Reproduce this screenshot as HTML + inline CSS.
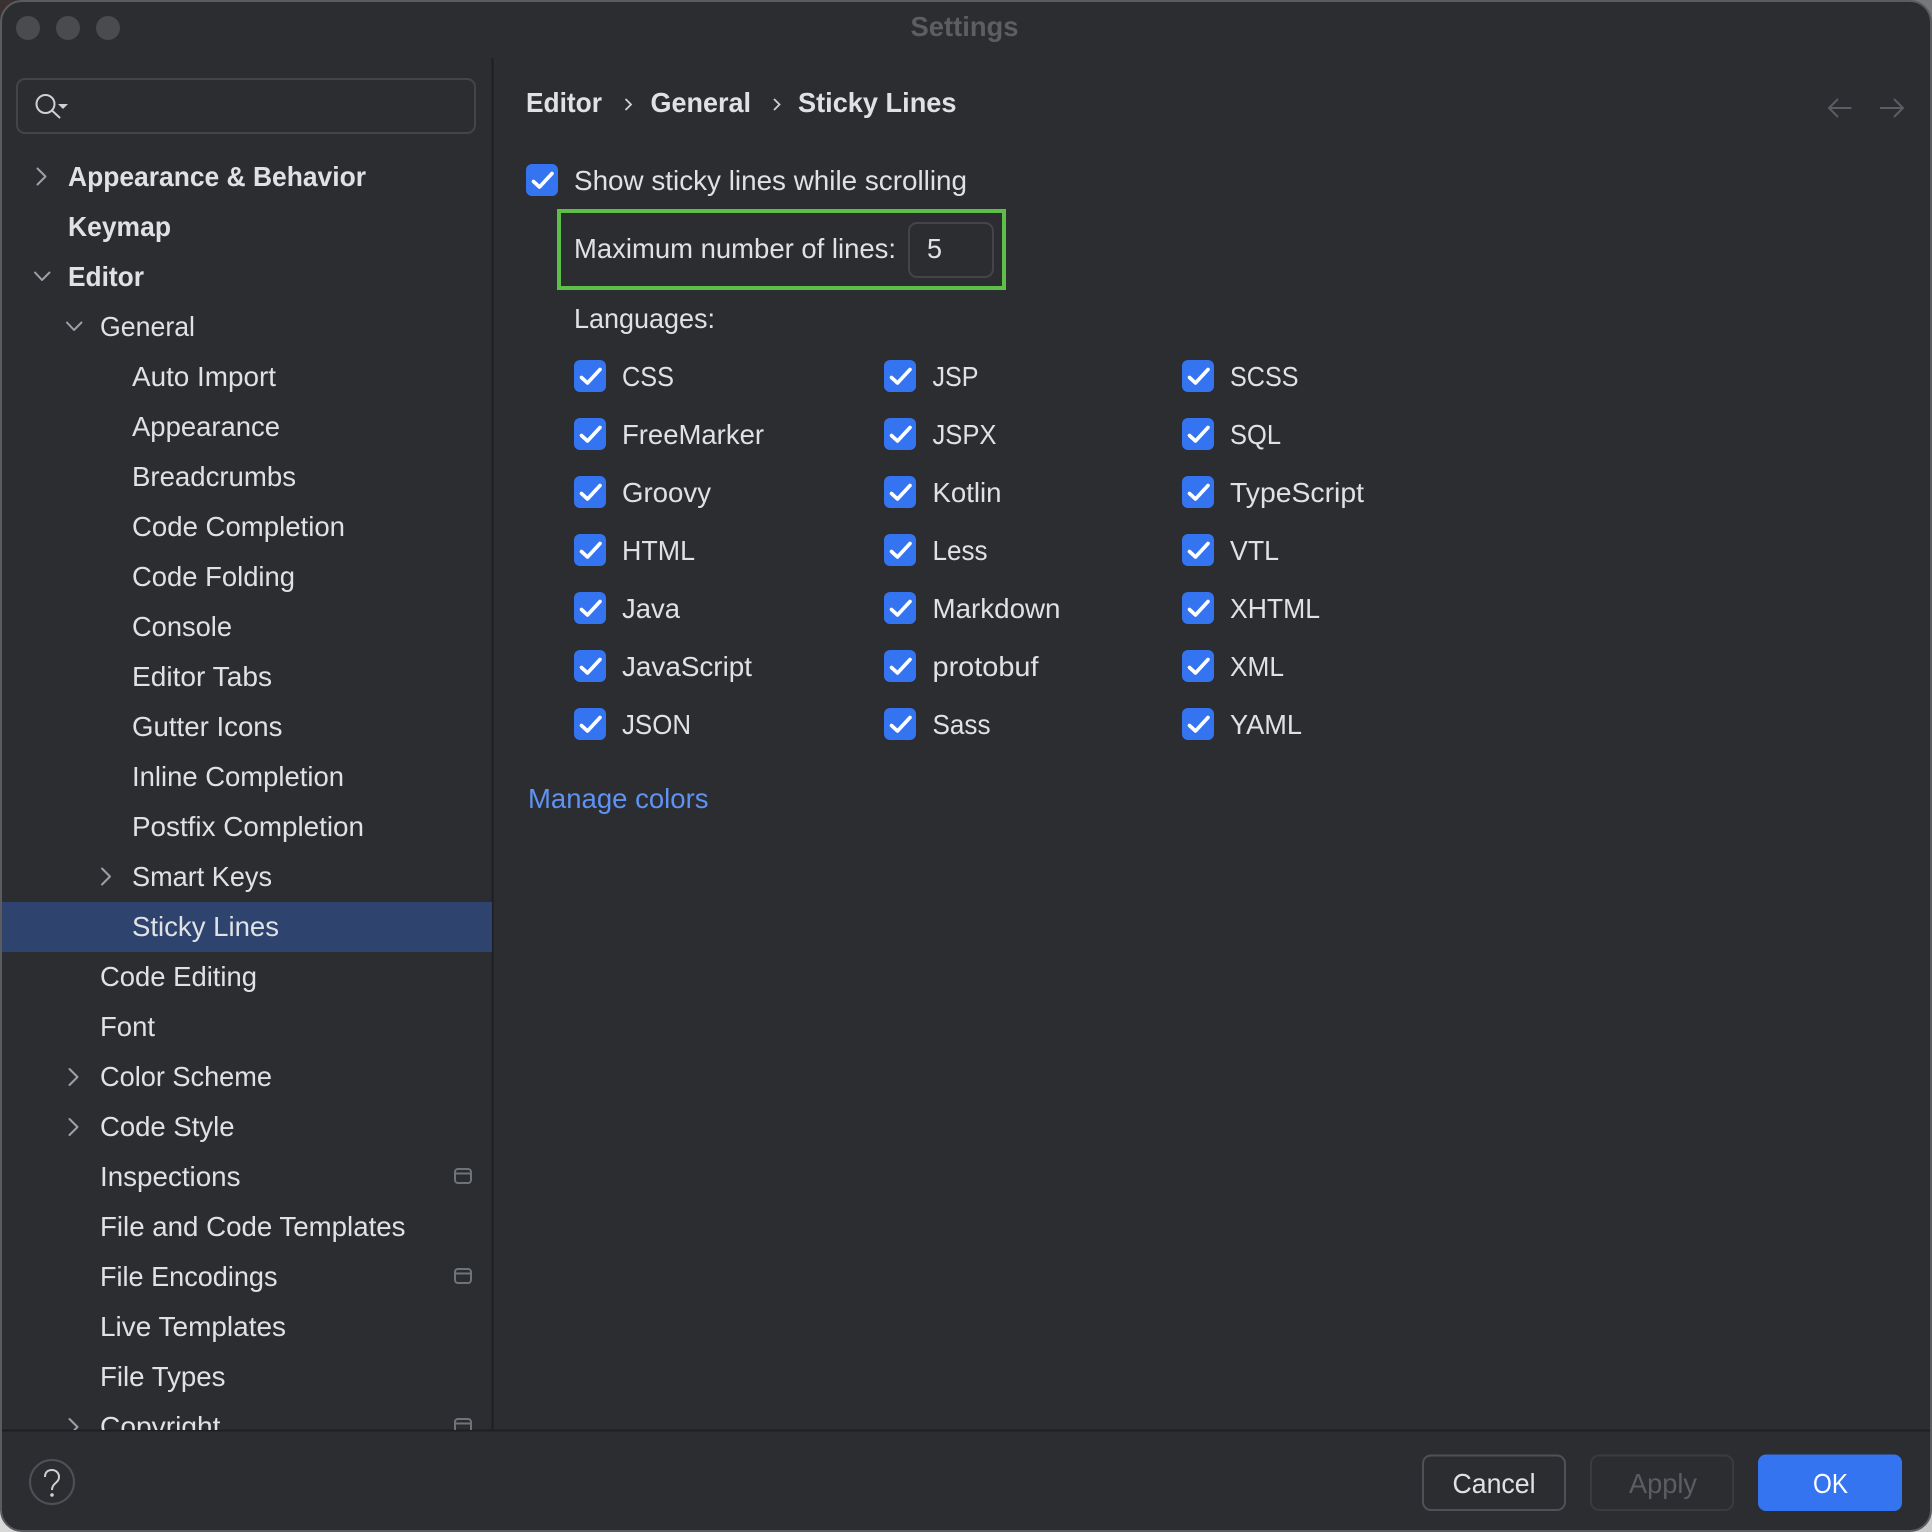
<!DOCTYPE html>
<html><head><meta charset="utf-8"><title>Settings</title>
<style>
html,body{margin:0;padding:0;background:#2B2D30;width:1932px;height:1532px;overflow:hidden}
svg{display:block}
text{font-family:"Liberation Sans",Arial,sans-serif;font-size:27.5px;fill:#DFE1E5}
.b{font-weight:700}
.ch{fill:none;stroke:#9DA0A8;stroke-width:2;stroke-linecap:round;stroke-linejoin:round}
</style></head><body>
<svg width="1932" height="1532" viewBox="0 0 1932 1532" xmlns="http://www.w3.org/2000/svg">
<defs>
<g id="cb"><rect width="32" height="32" rx="6" fill="#3574F0"/><path d="M7.5 17.5L13.5 23L26 9.5" fill="none" stroke="#fff" stroke-width="3.6" stroke-linecap="round" stroke-linejoin="round"/></g>
<g id="pi"><rect x="1" y="1" width="16" height="14" rx="3" fill="none" stroke="#6F737A" stroke-width="2"/><path d="M1 5.5H17" stroke="#6F737A" stroke-width="2"/></g>
<clipPath id="tc"><rect x="0" y="50" width="492" height="1380"/></clipPath>
</defs>
<rect x="0" y="0" width="40" height="40" fill="#3a3230"/>
<rect x="1892" y="0" width="40" height="40" fill="#77787a"/>
<rect x="0" y="1492" width="40" height="40" fill="#d8d8d8"/>
<rect x="1892" y="1492" width="40" height="40" fill="#c8c8c8"/>
<rect x="1" y="1" width="1930" height="1530" rx="21" fill="#2B2D30" stroke="#5B5C5F" stroke-width="2"/>
<circle cx="28" cy="28" r="12" fill="#4A4B4E"/><circle cx="68" cy="28" r="12" fill="#4A4B4E"/><circle cx="108" cy="28" r="12" fill="#4A4B4E"/>
<text class="b" x="910.500" y="36" textLength="108" lengthAdjust="spacingAndGlyphs" style="fill:#5C5E62">Settings</text>
<rect x="491.500" y="58" width="2" height="1372" fill="#1E1F22"/>
<rect x="2" y="1429.500" width="1928" height="2" fill="#1E1F22"/>
<rect x="17" y="79" width="458" height="54" rx="8" fill="none" stroke="#43454A" stroke-width="2"/>
<circle cx="45.500" cy="104" r="9" fill="none" stroke="#CED0D6" stroke-width="2"/>
<path d="M52.500 111L59.500 117.500" stroke="#CED0D6" stroke-width="2" stroke-linecap="round"/>
<path d="M58 104H68L63 109Z" fill="#CED0D6"/>
<rect x="2" y="902" width="490" height="50" fill="#2E436E"/>
<g clip-path="url(#tc)">
<text class="b" x="68" y="186" textLength="298" lengthAdjust="spacingAndGlyphs">Appearance &amp; Behavior</text>
<text class="b" x="68" y="236" textLength="103" lengthAdjust="spacingAndGlyphs">Keymap</text>
<text class="b" x="68" y="286" textLength="76" lengthAdjust="spacingAndGlyphs">Editor</text>
<text x="100" y="336" textLength="95" lengthAdjust="spacingAndGlyphs">General</text>
<text x="132" y="386" textLength="144" lengthAdjust="spacingAndGlyphs">Auto Import</text>
<text x="132" y="436" textLength="148" lengthAdjust="spacingAndGlyphs">Appearance</text>
<text x="132" y="486" textLength="164" lengthAdjust="spacingAndGlyphs">Breadcrumbs</text>
<text x="132" y="536" textLength="213" lengthAdjust="spacingAndGlyphs">Code Completion</text>
<text x="132" y="586" textLength="163" lengthAdjust="spacingAndGlyphs">Code Folding</text>
<text x="132" y="636" textLength="100" lengthAdjust="spacingAndGlyphs">Console</text>
<text x="132" y="686" textLength="140" lengthAdjust="spacingAndGlyphs">Editor Tabs</text>
<text x="132" y="736" textLength="150.500" lengthAdjust="spacingAndGlyphs">Gutter Icons</text>
<text x="132" y="786" textLength="212" lengthAdjust="spacingAndGlyphs">Inline Completion</text>
<text x="132" y="836" textLength="232" lengthAdjust="spacingAndGlyphs">Postfix Completion</text>
<text x="132" y="886" textLength="140" lengthAdjust="spacingAndGlyphs">Smart Keys</text>
<text x="132" y="936" textLength="147" lengthAdjust="spacingAndGlyphs">Sticky Lines</text>
<text x="100" y="986" textLength="157" lengthAdjust="spacingAndGlyphs">Code Editing</text>
<text x="100" y="1036" textLength="55" lengthAdjust="spacingAndGlyphs">Font</text>
<text x="100" y="1086" textLength="172" lengthAdjust="spacingAndGlyphs">Color Scheme</text>
<text x="100" y="1136" textLength="134.500" lengthAdjust="spacingAndGlyphs">Code Style</text>
<text x="100" y="1186" textLength="140.500" lengthAdjust="spacingAndGlyphs">Inspections</text>
<text x="100" y="1236" textLength="305.500" lengthAdjust="spacingAndGlyphs">File and Code Templates</text>
<text x="100" y="1286" textLength="177.500" lengthAdjust="spacingAndGlyphs">File Encodings</text>
<text x="100" y="1336" textLength="186" lengthAdjust="spacingAndGlyphs">Live Templates</text>
<text x="100" y="1386" textLength="125.500" lengthAdjust="spacingAndGlyphs">File Types</text>
<text x="100" y="1436" textLength="120.500" lengthAdjust="spacingAndGlyphs">Copyright</text>
<path class="ch" d="M37.500 168.500L45.500 176.500L37.500 184.500"/>
<path class="ch" d="M35 272.500L42 280L49.500 272.500"/>
<path class="ch" d="M67 322.500L74 330L81.500 322.500"/>
<path class="ch" d="M102 868.500L110 876.500L102 884.500"/>
<path class="ch" d="M69.500 1069L77.500 1077L69.500 1085"/>
<path class="ch" d="M69.500 1119L77.500 1127L69.500 1135"/>
<path class="ch" d="M69.500 1419L77.500 1427L69.500 1435"/>
<use href="#pi" x="454" y="1168"/>
<use href="#pi" x="454" y="1268"/>
<use href="#pi" x="454" y="1418"/>
</g>
<text class="b" x="526" y="112" textLength="76" lengthAdjust="spacingAndGlyphs">Editor</text>
<path d="M625.500 99L631 104.500L625.500 110" fill="none" stroke="#CED0D6" stroke-width="1.800"/>
<text class="b" x="650.500" y="112" textLength="100.500" lengthAdjust="spacingAndGlyphs">General</text>
<path d="M774 99L779.500 104.500L774 110" fill="none" stroke="#CED0D6" stroke-width="1.800"/>
<text class="b" x="798" y="112" textLength="158.500" lengthAdjust="spacingAndGlyphs">Sticky Lines</text>
<path d="M1851.500 108H1829.500M1838 99L1829 108L1838 117" fill="none" stroke="#5A5D63" stroke-width="2"/>
<path d="M1880 108H1902M1894 99L1903 108L1894 117" fill="none" stroke="#5A5D63" stroke-width="2"/>
<use href="#cb" x="526" y="164"/>
<text x="574" y="190" textLength="393" lengthAdjust="spacingAndGlyphs">Show sticky lines while scrolling</text>
<rect x="559" y="211" width="445" height="77" fill="none" stroke="#5DBE48" stroke-width="4"/>
<text x="574" y="258" textLength="322" lengthAdjust="spacingAndGlyphs">Maximum number of lines:</text>
<rect x="909" y="223" width="84" height="54" rx="8" fill="none" stroke="#43454A" stroke-width="2"/>
<text x="927" y="258" textLength="15" lengthAdjust="spacingAndGlyphs">5</text>
<text x="574" y="328" textLength="141" lengthAdjust="spacingAndGlyphs">Languages:</text>
<use href="#cb" x="574" y="360"/><text x="622" y="386" textLength="52" lengthAdjust="spacingAndGlyphs">CSS</text>
<use href="#cb" x="574" y="418"/><text x="622" y="444" textLength="142" lengthAdjust="spacingAndGlyphs">FreeMarker</text>
<use href="#cb" x="574" y="476"/><text x="622" y="502" textLength="89" lengthAdjust="spacingAndGlyphs">Groovy</text>
<use href="#cb" x="574" y="534"/><text x="622" y="560" textLength="73" lengthAdjust="spacingAndGlyphs">HTML</text>
<use href="#cb" x="574" y="592"/><text x="622" y="618" textLength="58" lengthAdjust="spacingAndGlyphs">Java</text>
<use href="#cb" x="574" y="650"/><text x="622" y="676" textLength="130" lengthAdjust="spacingAndGlyphs">JavaScript</text>
<use href="#cb" x="574" y="708"/><text x="622" y="734" textLength="69" lengthAdjust="spacingAndGlyphs">JSON</text>
<use href="#cb" x="884" y="360"/><text x="932.500" y="386" textLength="46" lengthAdjust="spacingAndGlyphs">JSP</text>
<use href="#cb" x="884" y="418"/><text x="932.500" y="444" textLength="64" lengthAdjust="spacingAndGlyphs">JSPX</text>
<use href="#cb" x="884" y="476"/><text x="932.500" y="502" textLength="69" lengthAdjust="spacingAndGlyphs">Kotlin</text>
<use href="#cb" x="884" y="534"/><text x="932.500" y="560" textLength="55" lengthAdjust="spacingAndGlyphs">Less</text>
<use href="#cb" x="884" y="592"/><text x="932.500" y="618" textLength="128" lengthAdjust="spacingAndGlyphs">Markdown</text>
<use href="#cb" x="884" y="650"/><text x="932.500" y="676" textLength="106" lengthAdjust="spacingAndGlyphs">protobuf</text>
<use href="#cb" x="884" y="708"/><text x="932.500" y="734" textLength="58" lengthAdjust="spacingAndGlyphs">Sass</text>
<use href="#cb" x="1182" y="360"/><text x="1230" y="386" textLength="68.500" lengthAdjust="spacingAndGlyphs">SCSS</text>
<use href="#cb" x="1182" y="418"/><text x="1230" y="444" textLength="51" lengthAdjust="spacingAndGlyphs">SQL</text>
<use href="#cb" x="1182" y="476"/><text x="1230" y="502" textLength="134" lengthAdjust="spacingAndGlyphs">TypeScript</text>
<use href="#cb" x="1182" y="534"/><text x="1230" y="560" textLength="49" lengthAdjust="spacingAndGlyphs">VTL</text>
<use href="#cb" x="1182" y="592"/><text x="1230" y="618" textLength="90" lengthAdjust="spacingAndGlyphs">XHTML</text>
<use href="#cb" x="1182" y="650"/><text x="1230" y="676" textLength="54" lengthAdjust="spacingAndGlyphs">XML</text>
<use href="#cb" x="1182" y="708"/><text x="1230" y="734" textLength="72" lengthAdjust="spacingAndGlyphs">YAML</text>
<text x="528" y="808" textLength="180.500" lengthAdjust="spacingAndGlyphs" style="fill:#5E92F3">Manage colors</text>
<circle cx="52" cy="1482" r="22" fill="none" stroke="#4E5157" stroke-width="2"/>
<path d="M45 1477C45 1472 48 1470 52 1470C56 1470 59 1473 59 1477C59 1483 52 1483 52 1490" fill="none" stroke="#CED0D6" stroke-width="2"/>
<circle cx="52" cy="1495" r="1.800" fill="#CED0D6"/>
<rect x="1423" y="1455.500" width="142" height="54.500" rx="8" fill="none" stroke="#4E5157" stroke-width="2"/>
<text x="1452.500" y="1493" textLength="83" lengthAdjust="spacingAndGlyphs">Cancel</text>
<rect x="1591" y="1455.500" width="142" height="54.500" rx="8" fill="none" stroke="#393B40" stroke-width="2"/>
<text x="1629" y="1493" textLength="68" lengthAdjust="spacingAndGlyphs" style="fill:#5A5D63">Apply</text>
<rect x="1758" y="1454.500" width="144" height="56.500" rx="8" fill="#3574F0"/>
<text x="1813" y="1493" textLength="35" lengthAdjust="spacingAndGlyphs" style="fill:#fff">OK</text>
</svg>
</body></html>
